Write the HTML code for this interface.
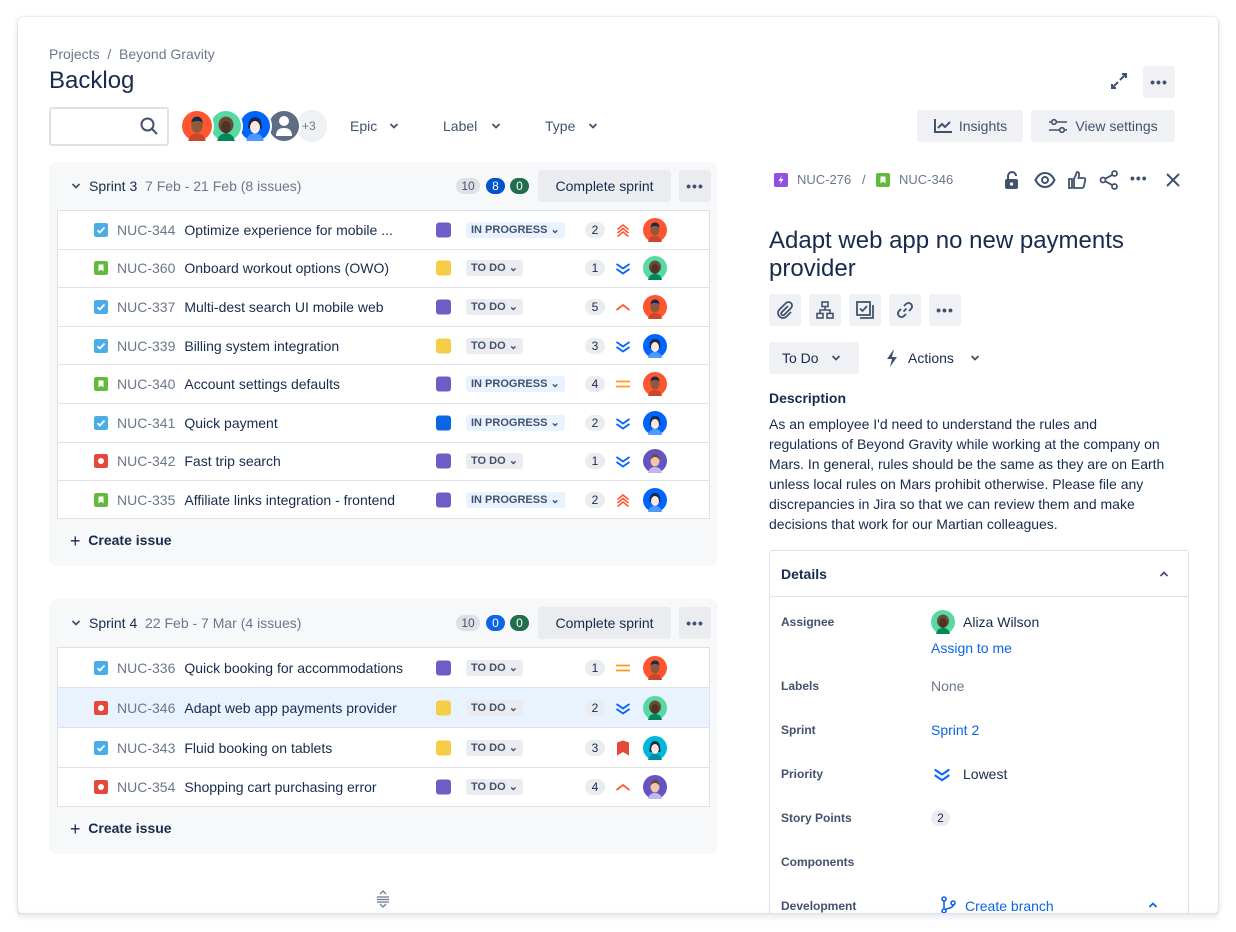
<!DOCTYPE html>
<html><head><meta charset="utf-8">
<style>
*{box-sizing:border-box;margin:0;padding:0}
html,body{width:1236px;height:932px;overflow:hidden}
body{background:#fff;font-family:"Liberation Sans",sans-serif;color:#172b4d;position:relative;font-size:14px}
.card{position:absolute;left:18px;top:17px;width:1200px;height:897px;background:#fff;border-radius:5px;box-shadow:0 2px 6px rgba(9,30,66,.18),0 0 1px rgba(9,30,66,.3);overflow:hidden}
.a{position:absolute}
.btn{position:absolute;background:#f0f1f4;border-radius:3px;display:flex;align-items:center;justify-content:center;color:#42526e}
.gray{color:#6b778c}
.sprint{position:absolute;left:49px;width:669px;background:#f7f8f9;border-radius:8px}
.tbl{position:absolute;left:57px;width:653px;background:#fff;border:1px solid #dfe1e6}
.row{position:relative;border-bottom:1px solid #dfe1e6;height:38.6px}
.row:last-child{border-bottom:none}
.row>*{position:absolute;top:50%;transform:translateY(-50%)}
.ti{left:36px;width:14px;height:14px;border-radius:2px}
.key{left:59px;color:#6b778c;white-space:nowrap}
.key b{font-weight:normal;color:#172b4d;margin-left:9px}
.ep{left:378px;width:15px;height:15px;border-radius:3px}
.st{left:408px;height:16px;padding:0 5px;border-radius:3px;font-size:11px;font-weight:bold;color:#42526e;background:#ebecf0;line-height:16px;white-space:nowrap}
.st.ip{background:#e9f2ff}
.pt{left:527px;width:20px;height:16px;border-radius:8px;background:#ebecf0;font-size:12px;text-align:center;line-height:16px}
.pr{left:557px}
.av{left:585px}
.badge{position:absolute;height:16px;border-radius:8px;font-size:12px;text-align:center;line-height:16px}
.lbl{position:absolute;left:781px;font-size:12px;font-weight:bold;color:#42526e}
.val{position:absolute;left:931px;font-size:14px}
</style></head><body>
<svg width="0" height="0" style="position:absolute">
<defs>
<symbol id="avA" viewBox="0 0 24 24"><circle cx="12" cy="12" r="12" fill="#ff5630"/><path d="M5 24c1-5 4-6 7-6s6 1 7 6z" fill="#c9482c"/><ellipse cx="12" cy="12" rx="4.5" ry="5.5" fill="#8d5a3b"/><path d="M7.5 10c0-4 2-5.5 4.5-5.5s4.5 1.5 4.5 5.5c-1-2-3-2-4.5-2s-3.5 0-4.5 2z" fill="#172b4d"/></symbol>
<symbol id="avB" viewBox="0 0 24 24"><circle cx="12" cy="12" r="12" fill="#57d9a3"/><path d="M5 24c1-5 4-6 7-6s6 1 7 6z" fill="#00875a"/><ellipse cx="12" cy="11" rx="6" ry="6.5" fill="#6b4a36"/><ellipse cx="12" cy="13" rx="4" ry="5" fill="#4e3426"/></symbol>
<symbol id="avC" viewBox="0 0 24 24"><circle cx="12" cy="12" r="12" fill="#0065ff"/><path d="M5 24c1-5 4-6 7-6s6 1 7 6z" fill="#4c9aff"/><path d="M6.5 14c0-7 2-9 5.5-9s5.5 2 5.5 9z" fill="#172b4d"/><ellipse cx="12" cy="13" rx="4" ry="5" fill="#fde9e0"/></symbol>
<symbol id="avD" viewBox="0 0 24 24"><circle cx="12" cy="12" r="12" fill="#6554c0"/><path d="M5 24c1-5 4-6 7-6s6 1 7 6z" fill="#c0b6f2"/><ellipse cx="12" cy="12" rx="4.5" ry="5.5" fill="#f2c4a8"/><path d="M7.5 11c0-4 2-6 4.5-6s4.5 2 4.5 6c-1-2-3-3-4.5-3s-3.5 1-4.5 3z" fill="#6b4a36"/></symbol>
<symbol id="avE" viewBox="0 0 24 24"><circle cx="12" cy="12" r="12" fill="#00b8d9"/><path d="M5 24c1-5 4-6 7-6s6 1 7 6z" fill="#008da6"/><path d="M6.5 16c0-8 2-11 5.5-11s5.5 3 5.5 11z" fill="#172b4d"/><ellipse cx="12" cy="13" rx="3.8" ry="5" fill="#fde9e0"/></symbol>
<symbol id="pHi" viewBox="0 0 16 16"><path d="M2.5 7.5l5.5-4.5 5.5 4.5M2.5 11l5.5-4.5 5.5 4.5M2.5 14.5l5.5-4.5 5.5 4.5" fill="none" stroke="#ff5630" stroke-width="1.6"/></symbol>
<symbol id="pLo" viewBox="0 0 16 16"><path d="M1.5 4l6.5 4.5 6.5-4.5M1.5 9l6.5 4.5 6.5-4.5" fill="none" stroke="#0065ff" stroke-width="1.8"/></symbol>
<symbol id="pH" viewBox="0 0 16 16"><path d="M1.5 11l6.5-5 6.5 5" fill="none" stroke="#ff5630" stroke-width="1.8"/></symbol>
<symbol id="pM" viewBox="0 0 16 16"><path d="M1 5.5h14M1 10.5h14" stroke="#ff991f" stroke-width="1.8"/></symbol>
<symbol id="pB" viewBox="0 0 16 16"><path d="M2 2.5l6-2 6 2v13l-6-3.5-6 3.5z" fill="#e5493a"/></symbol>
<symbol id="tTask" viewBox="0 0 14 14"><rect width="14" height="14" rx="2" fill="#4bade8"/><path d="M3.5 7.2l2.3 2.3 4.7-5" fill="none" stroke="#fff" stroke-width="1.8"/></symbol>
<symbol id="tStory" viewBox="0 0 14 14"><rect width="14" height="14" rx="2" fill="#63ba3c"/><path d="M4.5 3.5h5v7l-2.5-2-2.5 2z" fill="#fff"/></symbol>
<symbol id="tBug" viewBox="0 0 14 14"><rect width="14" height="14" rx="2" fill="#e5493a"/><circle cx="7" cy="7" r="3" fill="#fff"/></symbol>
</defs></svg>

<div class="card"></div>

<div class="a gray" style="left:49px;top:46px;font-size:14px">Projects &nbsp;/&nbsp; Beyond Gravity</div>
<div class="a" style="left:49px;top:67px;font-size:24px">Backlog</div>
<div class="a" style="left:1110px;top:72px"><svg width="18" height="18" viewBox="0 0 18 18"><path d="M10 8l6-6M12 2h4v4M8 10l-6 6M2 12v4h4" fill="none" stroke="#42526e" stroke-width="2"/></svg></div>
<div class="btn" style="left:1143px;top:66px;width:32px;height:32px;font-size:14px;font-weight:bold;letter-spacing:1px">•••</div>

<div class="a" style="left:49px;top:107px;width:120px;height:39px;border:2px solid #dfe1e6;border-radius:3px"></div>
<svg class="a" style="left:139px;top:116px" width="20" height="20" viewBox="0 0 20 20"><circle cx="8.5" cy="8.5" r="6" fill="none" stroke="#42526e" stroke-width="2"/><path d="M13 13l5 5" stroke="#42526e" stroke-width="2"/></svg>
<div class="a" style="left:297px;top:110px;width:30px;height:32px;border-radius:16px;background:#f0f1f4;font-size:12px;color:#6b778c;line-height:32px;padding-left:5px">+3</div>
<svg class="a" style="left:266px;top:108px" width="36" height="36"><circle cx="18" cy="18" r="17" fill="#fff"/><circle cx="18" cy="18" r="15" fill="#5e6c84"/><circle cx="18" cy="13" r="5" fill="#fff"/><path d="M10 28c0-6 3-8 8-8s8 2 8 8z" fill="#fff"/></svg>
<svg class="a" style="left:237px;top:108px" width="36" height="36"><circle cx="18" cy="18" r="17" fill="#fff"/><use href="#avC" x="3" y="3" width="30" height="30"/></svg>
<svg class="a" style="left:208px;top:108px" width="36" height="36"><circle cx="18" cy="18" r="17" fill="#fff"/><use href="#avB" x="3" y="3" width="30" height="30"/></svg>
<svg class="a" style="left:179px;top:108px" width="36" height="36"><circle cx="18" cy="18" r="17" fill="#fff"/><use href="#avA" x="3" y="3" width="30" height="30"/></svg>

<div class="a" style="left:350px;top:118px;color:#42526e">Epic</div>
<svg class="a" style="left:389px;top:122px" width="10" height="8"><path d="M1.5 2l3.5 3.5 3.5-3.5" fill="none" stroke="#42526e" stroke-width="1.8"/></svg>
<div class="a" style="left:443px;top:118px;color:#42526e">Label</div>
<svg class="a" style="left:491px;top:122px" width="10" height="8"><path d="M1.5 2l3.5 3.5 3.5-3.5" fill="none" stroke="#42526e" stroke-width="1.8"/></svg>
<div class="a" style="left:545px;top:118px;color:#42526e">Type</div>
<svg class="a" style="left:588px;top:122px" width="10" height="8"><path d="M1.5 2l3.5 3.5 3.5-3.5" fill="none" stroke="#42526e" stroke-width="1.8"/></svg>

<div class="btn" style="left:917px;top:110px;width:106px;height:32px"><svg width="20" height="16" viewBox="0 0 20 16" style="margin-right:6px"><path d="M2 1v13h17" fill="none" stroke="#42526e" stroke-width="2"/><path d="M5 10l4-4 3 3 5-5" fill="none" stroke="#42526e" stroke-width="2"/></svg>Insights</div>
<div class="btn" style="left:1031px;top:110px;width:144px;height:32px"><svg width="20" height="16" viewBox="0 0 20 16" style="margin-right:7px"><path d="M1 4h18M1 12h18" stroke="#42526e" stroke-width="1.6"/><circle cx="6" cy="4" r="2.3" fill="#f0f1f4" stroke="#42526e" stroke-width="1.6"/><circle cx="14" cy="12" r="2.3" fill="#f0f1f4" stroke="#42526e" stroke-width="1.6"/></svg>View settings</div>

<div class="sprint" style="top:162px;height:404px"></div>
<svg class="a" style="left:71px;top:182px" width="10" height="8"><path d="M1.5 2l3.5 3.5 3.5-3.5" fill="none" stroke="#42526e" stroke-width="1.8"/></svg>
<div class="a" style="left:89px;top:178px;color:#42526e"><span style="color:#172b4d">Sprint 3</span>&nbsp; <span class="gray">7 Feb - 21 Feb (8 issues)</span></div>
<div class="badge" style="left:456px;top:178px;width:24px;background:#dfe1e6;color:#42526e">10</div>
<div class="badge" style="left:486px;top:178px;width:19px;background:#0052cc;color:#fff">8</div>
<div class="badge" style="left:510px;top:178px;width:19px;background:#216e4e;color:#fff">0</div>
<div class="btn" style="left:538px;top:170px;width:133px;height:32px;background:#ebecf0;color:#172b4d">Complete sprint</div>
<div class="btn" style="left:679px;top:170px;width:32px;height:32px;background:#ebecf0;font-size:14px;font-weight:bold;letter-spacing:1px;color:#42526e">•••</div>

<div class="tbl" style="top:210px;height:309px">
<div class="row"><svg class="ti"><use href="#tTask"/></svg><span class="key">NUC-344<b>Optimize experience for mobile ...</b></span><span class="ep" style="background:#6e5dc6"></span><span class="st ip">IN PROGRESS ⌄</span><span class="pt">2</span><svg class="pr" width="16" height="16"><use href="#pHi"/></svg><svg class="av" width="24" height="24"><use href="#avA"/></svg></div>
<div class="row"><svg class="ti"><use href="#tStory"/></svg><span class="key">NUC-360<b>Onboard workout options (OWO)</b></span><span class="ep" style="background:#f5cd47"></span><span class="st">TO DO ⌄</span><span class="pt">1</span><svg class="pr" width="16" height="16"><use href="#pLo"/></svg><svg class="av" width="24" height="24"><use href="#avB"/></svg></div>
<div class="row"><svg class="ti"><use href="#tTask"/></svg><span class="key">NUC-337<b>Multi-dest search UI mobile web</b></span><span class="ep" style="background:#6e5dc6"></span><span class="st">TO DO ⌄</span><span class="pt">5</span><svg class="pr" width="16" height="16"><use href="#pH"/></svg><svg class="av" width="24" height="24"><use href="#avA"/></svg></div>
<div class="row"><svg class="ti"><use href="#tTask"/></svg><span class="key">NUC-339<b>Billing system integration</b></span><span class="ep" style="background:#f5cd47"></span><span class="st">TO DO ⌄</span><span class="pt">3</span><svg class="pr" width="16" height="16"><use href="#pLo"/></svg><svg class="av" width="24" height="24"><use href="#avC"/></svg></div>
<div class="row"><svg class="ti"><use href="#tStory"/></svg><span class="key">NUC-340<b>Account settings defaults</b></span><span class="ep" style="background:#6e5dc6"></span><span class="st ip">IN PROGRESS ⌄</span><span class="pt">4</span><svg class="pr" width="16" height="16"><use href="#pM"/></svg><svg class="av" width="24" height="24"><use href="#avA"/></svg></div>
<div class="row"><svg class="ti"><use href="#tTask"/></svg><span class="key">NUC-341<b>Quick payment</b></span><span class="ep" style="background:#0c66e4"></span><span class="st ip">IN PROGRESS ⌄</span><span class="pt">2</span><svg class="pr" width="16" height="16"><use href="#pLo"/></svg><svg class="av" width="24" height="24"><use href="#avC"/></svg></div>
<div class="row"><svg class="ti"><use href="#tBug"/></svg><span class="key">NUC-342<b>Fast trip search</b></span><span class="ep" style="background:#6e5dc6"></span><span class="st">TO DO ⌄</span><span class="pt">1</span><svg class="pr" width="16" height="16"><use href="#pLo"/></svg><svg class="av" width="24" height="24"><use href="#avD"/></svg></div>
<div class="row"><svg class="ti"><use href="#tStory"/></svg><span class="key">NUC-335<b>Affiliate links integration - frontend</b></span><span class="ep" style="background:#6e5dc6"></span><span class="st ip">IN PROGRESS ⌄</span><span class="pt">2</span><svg class="pr" width="16" height="16"><use href="#pHi"/></svg><svg class="av" width="24" height="24"><use href="#avC"/></svg></div>
</div>
<div class="a" style="left:70px;top:531px;font-weight:bold"><span style="font-size:18px;font-weight:normal;vertical-align:-2px">+</span>&nbsp; Create issue</div>

<div class="sprint" style="top:599px;height:255px"></div>
<svg class="a" style="left:71px;top:619px" width="10" height="8"><path d="M1.5 2l3.5 3.5 3.5-3.5" fill="none" stroke="#42526e" stroke-width="1.8"/></svg>
<div class="a" style="left:89px;top:615px;color:#42526e"><span style="color:#172b4d">Sprint 4</span>&nbsp; <span class="gray">22 Feb - 7 Mar (4 issues)</span></div>
<div class="badge" style="left:456px;top:615px;width:24px;background:#dfe1e6;color:#42526e">10</div>
<div class="badge" style="left:486px;top:615px;width:19px;background:#0c66e4;color:#fff">0</div>
<div class="badge" style="left:510px;top:615px;width:19px;background:#216e4e;color:#fff">0</div>
<div class="btn" style="left:538px;top:607px;width:133px;height:32px;background:#ebecf0;color:#172b4d">Complete sprint</div>
<div class="btn" style="left:679px;top:607px;width:32px;height:32px;background:#ebecf0;font-size:14px;font-weight:bold;letter-spacing:1px;color:#42526e">•••</div>

<div class="tbl" style="top:647px;height:160px">
<div class="row" style="height:40px"><svg class="ti"><use href="#tTask"/></svg><span class="key">NUC-336<b>Quick booking for accommodations</b></span><span class="ep" style="background:#6e5dc6"></span><span class="st">TO DO ⌄</span><span class="pt">1</span><svg class="pr" width="16" height="16"><use href="#pM"/></svg><svg class="av" width="24" height="24"><use href="#avA"/></svg></div>
<div class="row" style="height:40px;background:#e9f2ff"><svg class="ti"><use href="#tBug"/></svg><span class="key">NUC-346<b>Adapt web app payments provider</b></span><span class="ep" style="background:#f5cd47"></span><span class="st">TO DO ⌄</span><span class="pt">2</span><svg class="pr" width="16" height="16"><use href="#pLo"/></svg><svg class="av" width="24" height="24"><use href="#avB"/></svg></div>
<div class="row" style="height:40px"><svg class="ti"><use href="#tTask"/></svg><span class="key">NUC-343<b>Fluid booking on tablets</b></span><span class="ep" style="background:#f5cd47"></span><span class="st">TO DO ⌄</span><span class="pt">3</span><svg class="pr" width="16" height="16"><use href="#pB"/></svg><svg class="av" width="24" height="24"><use href="#avE"/></svg></div>
<div class="row" style="height:38px"><svg class="ti"><use href="#tBug"/></svg><span class="key">NUC-354<b>Shopping cart purchasing error</b></span><span class="ep" style="background:#6e5dc6"></span><span class="st">TO DO ⌄</span><span class="pt">4</span><svg class="pr" width="16" height="16"><use href="#pH"/></svg><svg class="av" width="24" height="24"><use href="#avD"/></svg></div>
</div>
<div class="a" style="left:70px;top:819px;font-weight:bold"><span style="font-size:18px;font-weight:normal;vertical-align:-2px">+</span>&nbsp; Create issue</div>

<svg class="a" style="left:376px;top:889px" width="14" height="20" viewBox="0 0 14 20"><path d="M4 5l3-3 3 3M4 15l3 3 3-3" fill="none" stroke="#6b778c" stroke-width="1.3"/><path d="M1 8h12M1 10.5h12M1 13h12" stroke="#6b778c" stroke-width="1.3"/></svg>

<svg class="a" style="left:774px;top:173px" width="14" height="14"><rect width="14" height="14" rx="2" fill="#904ee2"/><path d="M8 2.5L4.5 8h2.5l-1 3.5L9.5 6H7z" fill="#fff"/></svg>
<div class="a gray" style="left:797px;top:172px;font-size:13px">NUC-276 &nbsp;&nbsp;/</div>
<svg class="a" style="left:876px;top:173px" width="14" height="14"><use href="#tStory"/></svg>
<div class="a gray" style="left:899px;top:172px;font-size:13px">NUC-346</div>

<svg class="a" style="left:1003px;top:170px" width="18" height="20" viewBox="0 0 18 20"><path d="M5 9V6a4 4 0 0 1 8 0" fill="none" stroke="#42526e" stroke-width="2"/><rect x="2" y="9" width="13" height="10" rx="2" fill="#42526e"/><circle cx="8.5" cy="14" r="1.6" fill="#fff"/></svg>
<svg class="a" style="left:1034px;top:171px" width="22" height="18" viewBox="0 0 22 18"><path d="M1.5 9C4 4 7.5 2 11 2s7 2 9.5 7c-2.5 5-6 7-9.5 7S4 14 1.5 9z" fill="none" stroke="#42526e" stroke-width="2"/><circle cx="11" cy="9" r="3" fill="none" stroke="#42526e" stroke-width="2"/></svg>
<svg class="a" style="left:1067px;top:170px" width="20" height="20" viewBox="0 0 20 20"><path d="M2 9h3v9H2zM7 9l3-7c2 0 2.5 1.5 2 3.5L11.5 8H17c1 0 1.5 1 1.3 2l-1.5 6.5c-.2 1-1 1.5-2 1.5H7z" fill="none" stroke="#42526e" stroke-width="1.8"/></svg>
<svg class="a" style="left:1099px;top:170px" width="20" height="20" viewBox="0 0 20 20"><circle cx="4" cy="10" r="2.5" fill="none" stroke="#42526e" stroke-width="1.8"/><circle cx="15.5" cy="3.5" r="2.5" fill="none" stroke="#42526e" stroke-width="1.8"/><circle cx="15.5" cy="16.5" r="2.5" fill="none" stroke="#42526e" stroke-width="1.8"/><path d="M6 8.8l7.5-4M6 11.2l7.5 4" stroke="#42526e" stroke-width="1.8"/></svg>
<div class="a" style="left:1130px;top:170px;font-size:14px;font-weight:bold;letter-spacing:1px;color:#42526e">•••</div>
<svg class="a" style="left:1165px;top:172px" width="16" height="16" viewBox="0 0 16 16"><path d="M2 2l12 12M14 2L2 14" stroke="#42526e" stroke-width="2"/></svg>

<div class="a" style="left:769px;top:227px;font-size:24px;line-height:28px;width:400px">Adapt web app no new payments provider</div>

<div class="btn" style="left:769px;top:294px;width:32px;height:32px"><svg width="20" height="20" viewBox="0 0 20 20"><path d="M13 6l-6.5 6.5a1.8 1.8 0 0 0 2.5 2.5L16 8a3.5 3.5 0 0 0-5-5L4 10a5 5 0 0 0 7 7l5-5" fill="none" stroke="#42526e" stroke-width="1.8"/></svg></div>
<div class="btn" style="left:809px;top:294px;width:32px;height:32px"><svg width="20" height="20" viewBox="0 0 20 20"><rect x="7" y="2" width="6" height="4.5" fill="none" stroke="#42526e" stroke-width="1.6"/><rect x="2" y="13.5" width="6" height="4.5" fill="none" stroke="#42526e" stroke-width="1.6"/><rect x="12" y="13.5" width="6" height="4.5" fill="none" stroke="#42526e" stroke-width="1.6"/><path d="M10 6.5v3.5M5 13.5V10h10v3.5" fill="none" stroke="#42526e" stroke-width="1.6"/></svg></div>
<div class="btn" style="left:849px;top:294px;width:32px;height:32px"><svg width="20" height="20" viewBox="0 0 20 20"><rect x="2" y="2" width="13" height="13" fill="none" stroke="#42526e" stroke-width="1.8"/><path d="M18 5v13H5" fill="none" stroke="#42526e" stroke-width="1.8"/><path d="M5 8.5l2.5 2.5 4.5-5" fill="none" stroke="#42526e" stroke-width="1.8"/></svg></div>
<div class="btn" style="left:889px;top:294px;width:32px;height:32px"><svg width="20" height="20" viewBox="0 0 20 20"><path d="M8.5 11.5l3-3M9 6l2-2a3.5 3.5 0 0 1 5 5l-2 2M11 14l-2 2a3.5 3.5 0 0 1-5-5l2-2" fill="none" stroke="#42526e" stroke-width="1.9"/></svg></div>
<div class="btn" style="left:929px;top:294px;width:32px;height:32px;font-size:14px;font-weight:bold;letter-spacing:1px">•••</div>

<div class="btn" style="left:769px;top:342px;width:90px;height:32px;color:#172b4d;justify-content:flex-start;padding-left:13px">To Do</div>
<svg class="a" style="left:831px;top:354px" width="10" height="8"><path d="M1.5 2l3.5 3.5 3.5-3.5" fill="none" stroke="#42526e" stroke-width="1.8"/></svg>
<svg class="a" style="left:884px;top:348px" width="16" height="20" viewBox="0 0 16 20"><path d="M10 1L3 11h5l-2 8 7-10H8z" fill="#42526e"/></svg>
<div class="a" style="left:908px;top:350px;color:#172b4d">Actions</div>
<svg class="a" style="left:970px;top:354px" width="10" height="8"><path d="M1.5 2l3.5 3.5 3.5-3.5" fill="none" stroke="#42526e" stroke-width="1.8"/></svg>

<div class="a" style="left:769px;top:390px;font-weight:bold">Description</div>
<div class="a" style="left:769px;top:414px;line-height:20px;width:430px">As an employee I'd need to understand the rules and<br>regulations of Beyond Gravity while working at the company on<br>Mars. In general, rules should be the same as they are on Earth<br>unless local rules on Mars prohibit otherwise. Please file any<br>discrepancies in Jira so that we can review them and make<br>decisions that work for our Martian colleagues.</div>

<div class="a" style="left:769px;top:550px;width:420px;height:364px;border:1px solid #dfe1e6;border-bottom:none;border-radius:3px 3px 0 0"></div>
<div class="a" style="left:770px;top:596px;width:418px;height:1px;background:#dfe1e6"></div>
<div class="a" style="left:781px;top:566px;font-weight:bold;font-size:14px">Details</div>
<svg class="a" style="left:1159px;top:570px" width="10" height="8"><path d="M1.5 6l3.5-3.5 3.5 3.5" fill="none" stroke="#42526e" stroke-width="1.8"/></svg>

<div class="lbl" style="top:615px">Assignee</div>
<svg class="a" style="left:931px;top:610px" width="24" height="24"><use href="#avB"/></svg>
<div class="val" style="left:963px;top:614px">Aliza Wilson</div>
<div class="val" style="top:640px;color:#0c66e4">Assign to me</div>
<div class="lbl" style="top:679px">Labels</div>
<div class="val gray" style="top:678px">None</div>
<div class="lbl" style="top:723px">Sprint</div>
<div class="val" style="top:722px;color:#0c66e4">Sprint 2</div>
<div class="lbl" style="top:767px">Priority</div>
<svg class="a" style="left:933px;top:765px" width="18" height="18"><use href="#pLo"/></svg>
<div class="val" style="left:963px;top:766px">Lowest</div>
<div class="lbl" style="top:811px">Story Points</div>
<div class="a" style="left:931px;top:810px;width:19px;height:16px;border-radius:8px;background:#ebecf0;font-size:12px;text-align:center;line-height:16px">2</div>
<div class="lbl" style="top:855px">Components</div>
<div class="lbl" style="top:899px">Development</div>
<svg class="a" style="left:940px;top:896px" width="18" height="18" viewBox="0 0 18 18"><circle cx="4" cy="3" r="2" fill="none" stroke="#0c66e4" stroke-width="1.6"/><circle cx="4" cy="15" r="2" fill="none" stroke="#0c66e4" stroke-width="1.6"/><circle cx="13" cy="7" r="2" fill="none" stroke="#0c66e4" stroke-width="1.6"/><path d="M4 5v8M13 9c0 3-4 3-8 4.5" fill="none" stroke="#0c66e4" stroke-width="1.6"/></svg>
<div class="val" style="left:965px;top:898px;color:#0c66e4">Create branch</div>
<svg class="a" style="left:1148px;top:901px" width="10" height="8"><path d="M1.5 6l3.5-3.5 3.5 3.5" fill="none" stroke="#0c66e4" stroke-width="1.8"/></svg>

<div class="a" style="left:0;top:914px;width:1236px;height:18px;background:#fff"></div>
<div class="a" style="left:18px;top:913px;width:1200px;height:2px;box-shadow:0 2px 5px rgba(9,30,66,.18);background:#e4e6ea"></div>
</body></html>
